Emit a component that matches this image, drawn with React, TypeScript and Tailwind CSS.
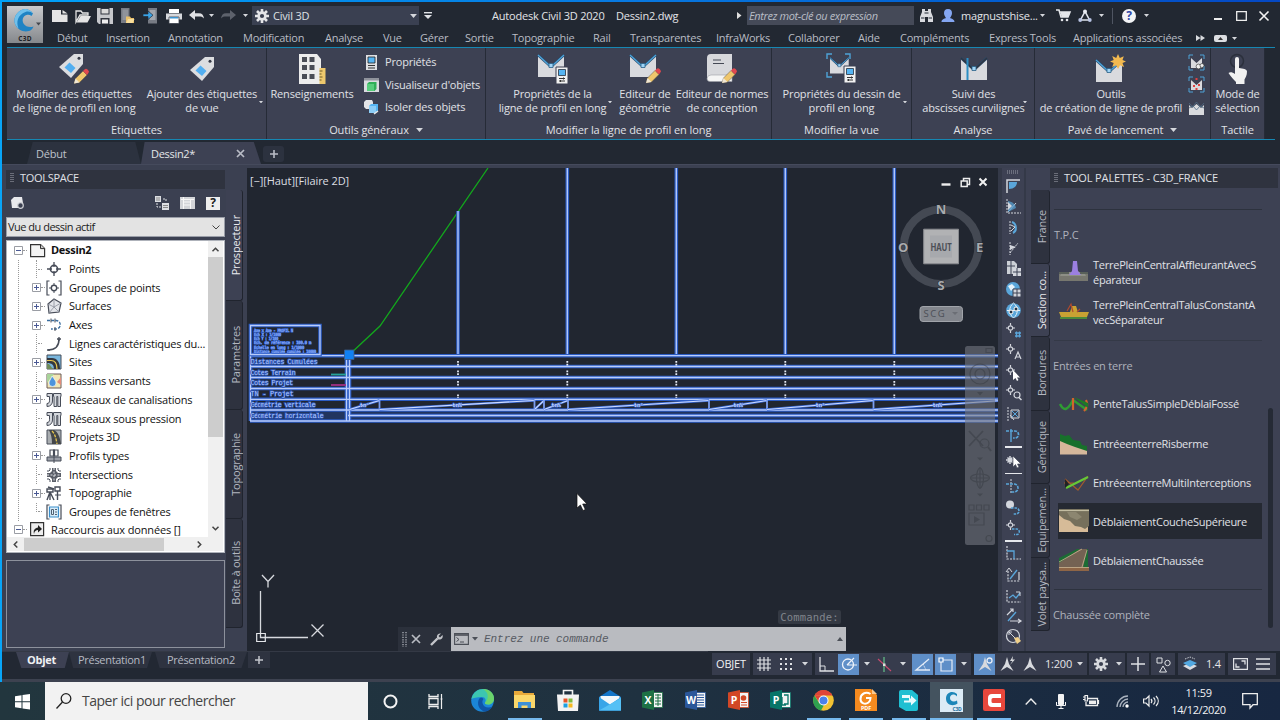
import React from "react";

type Kids = { children?: React.ReactNode };

/* ---------- shared helpers ---------- */

function Slot({ className, children }: { className: string } & Kids) {
  return <span className={`flex shrink-0 items-center justify-center ${className}`}>{children}</span>;
}

function Icon({ s = 16, h, vb, children }: { s?: number; h?: number; vb?: string } & Kids) {
  return (
    <svg width={s} height={h ?? s} viewBox={vb ?? `0 0 ${s} ${h ?? s}`} fill="none" className="block shrink-0 overflow-visible">
      {children}
    </svg>
  );
}

function Caret({ s = 6, c = "#d5d7dc" }: { s?: number; c?: string }) {
  return (
    <svg width={s} height={s / 2 + 0.5} viewBox="0 0 6 3.5" className="block shrink-0">
      <path d="M0 0h6L3 3.5z" fill={c} />
    </svg>
  );
}

function Pencil({ x, y }: { x: number; y: number }) {
  return (
    <g transform={`translate(${x} ${y})`}>
      <path d="M0 14.5 1.5 9.5 9 2l4 4-7.5 7.5z" fill="#efc66c" stroke="#5b5348" strokeWidth=".5" />
      <path d="M9 2l1.5-1.5a2 2 0 0 1 3 0l.7.7a2 2 0 0 1 0 3L13 6z" fill="#e0484f" />
      <path d="M0 14.5 1.5 9.5l4 4z" fill="#f0e6d4" />
    </g>
  );
}

function PropBadge({ x, y }: { x: number; y: number }) {
  return (
    <g transform={`translate(${x} ${y})`}>
      <path d="M0 0h12v17H0z" fill="#f1f1f1" stroke="#3d4153" />
      <path d="M2.500 2.500h7v6h-7z" fill="#55b4f2" stroke="#27313d" strokeWidth=".8" />
      <path d="M3 11.500h6M3 14h6M7.500 10.500v2M4.500 13v2" stroke="#333" strokeWidth="1" />
    </g>
  );
}

/* ---------- title bar ---------- */

function QuickAccess() {
  return (
    <div className="flex h-[27px] items-center">
      <Slot className="w-[22px]">
        <Icon s={16}><path d="M0 2h9v4.500h6.500V14H0z" fill="#e4e4e4" /><path d="M10.500 2l5 3.500h-5z" fill="#e4e4e4" /></Icon>
      </Slot>
      <Slot className="w-[23px]">
        <Icon s={16}><path d="M1 14V3h5l1.500 2H13v2H5z" fill="none" stroke="#e4e4e4" strokeWidth="1.300" /><path d="M5.500 8H16l-3.500 6.500H1.500z" fill="#e4e4e4" /></Icon>
      </Slot>
      <Slot className="w-[22px]">
        <Icon s={16}><path d="M0 0h16v16H2l-2-2z" fill="#c6c8cc" /><path d="M3.500 0h9v6.500h-9zM3.500 10h9v6h-9z" fill="#31353f" /><path d="M4.500 1h7v4.500h-7z" fill="#dadada" /><path d="M5 11.500h6v4H5z" fill="#eee" /></Icon>
      </Slot>
      <Slot className="w-[23px]">
        <Icon s={16}><path d="M1 0h8.500v15H1z" fill="#777b84" /><path d="M2.500 1.500h5.500V12h-5.500z" fill="#8f939b" /><path d="M6 8.500h4l1 1.500h3v5H6z" fill="#e9c06a" /><path d="M8 11h6.500l-2 4H6z" fill="#f7dd9c" /></Icon>
      </Slot>
      <Slot className="w-[23px]">
        <Icon s={16}><path d="M5 0h9v15.500H5z" fill="#777b84" /><path d="M6.500 2h6v10h-6z" fill="#a2a6ad" /><path d="M0 6h5V3l5 4.200-5 4.300v-3H0z" fill="#39a3e6" stroke="#222a36" strokeWidth=".7" /></Icon>
      </Slot>
      <Slot className="w-[23px]">
        <Icon s={16}><path d="M3 1h10v4H3z" fill="#fff" /><path d="M0 5.500h16v6H0z" fill="#d6d8dc" /><path d="M3 9h10v6.500H3z" fill="#fff" stroke="#3a3f4a" strokeWidth=".8" /><path d="M4 9h8v1.500H4z" fill="#3b95d2" /></Icon>
      </Slot>
      <Slot className="w-[22px]">
        <Icon s={15}><path d="M0 7l6-5v3.300h4c3 0 4.500 1.800 5 5.200-1.500-1.800-3-2-5-2H6V12z" fill="#e0e1e4" /></Icon>
      </Slot>
      <Slot className="w-[8px]"><Caret s={5} /></Slot>
      <Slot className="w-[26px]">
        <Icon s={15}><path d="M15 7L9 2v3.300H5C2 5.300.5 7.100 0 10.500c1.500-1.800 3-2 5-2h4V12z" fill="#5d626c" /></Icon>
      </Slot>
      <Slot className="mr-[4px] w-[8px]"><Caret s={5} /></Slot>
      <div className="-ml-px flex h-[19px] w-[167px] items-center bg-[#3a4051] pl-[3px] pr-[2px] text-[#dfe1e5]">
        <Gear s={14} />
        <span className="ml-[4px] flex-1">Civil 3D</span>
        <Caret s={7} />
      </div>
      <Slot className="w-[18px]">
        <Icon s={8}><path d="M0 .7h8" stroke="#dfe1e5" strokeWidth="1.400" /><path d="M0 3h8L4 7z" fill="#dfe1e5" /></Icon>
      </Slot>
      <span className="ml-[55px] w-[124px] text-[#e2e4e8]">Autodesk Civil 3D 2020</span>
      <span className="w-[121px] text-[#e2e4e8]">Dessin2.dwg</span>
      <Icon s={5} h={7}><path d="M0 0l4.500 3.500L0 7z" fill="#e0e0e0" /></Icon>
      <div className="ml-[5px] flex h-[19px] w-[167px] items-center bg-[#454a58] pl-[2px] italic text-[#b9bdc6]">
        <span className="tracking-[-0.38px]">Entrez mot-clé ou expression</span>
      </div>
      <Slot className="w-[24px]">
        <Icon s={13}><path d="M2 0h3v2h3V0h3v3l2 5v5H8V8H5v5H0V8l2-5z" fill="#d9dbe0" /><path d="M1 9h3.500M8.500 9H12M4.500 4h4" stroke="#232a36" strokeWidth="1" /></Icon>
      </Slot>
      <Slot className="w-[20px]">
        <Icon s={14}><path d="M7 0c3 0 4 2 4 4.200S9.500 8 9 9c1.500.8 4.500 1 4.500 4H.5c0-3 3-3.200 4.500-4C4.500 8 3 6.400 3 4.200S4 0 7 0z" fill="#84a6f2" /></Icon>
      </Slot>
      <span className="ml-[3px] w-[79px] text-[#e2e4e8]">magnustshise...</span>
      <Caret s={5} />
      <Slot className="ml-[6px] w-[24px]">
        <Icon s={14} h={13}><path d="M0 1h3l2 7h7l2-5H4" stroke="#e4e6ea" strokeWidth="1.600" fill="none" /><path d="M4.500 3H14l-2 5H5.500z" fill="#e4e6ea" /><circle cx="6" cy="11" r="1.300" fill="#e4e6ea" /><circle cx="11" cy="11" r="1.300" fill="#e4e6ea" /></Icon>
      </Slot>
      <Slot className="w-[20px]">
        <Icon s={14}><path d="M7 2.500L2.500 11h9z" stroke="#dfe3ec" strokeWidth="1.600" /><circle cx="7" cy="2.500" r="2" fill="#e9ecf3" /><circle cx="2.200" cy="11" r="1.900" fill="#b9c4e4" /><circle cx="11.800" cy="11" r="1.900" fill="#b9c4e4" /></Icon>
      </Slot>
      <Slot className="w-[12px]"><Caret s={5} /></Slot>
      <span className="ml-[5px] h-[16px] w-px bg-[#4f5562]" />
      <Slot className="ml-[3px] w-[26px]">
        <span className="flex h-[14px] w-[14px] items-center justify-center rounded-full bg-[#f3f4f6] text-[12px] font-bold leading-none text-[#3047a8]">?</span>
      </Slot>
      <Slot className="w-[8px]"><Caret s={5} /></Slot>
      <Slot className="ml-[60px] w-[16px]"><Icon s={8}><path d="M0 7h8" stroke="#eee" strokeWidth="2" /></Icon></Slot>
      <Slot className="ml-[4px] w-[22px]"><Icon s={11} h={10}><path d="M.7.7h9.600v8.600H.7z" stroke="#eee" strokeWidth="1.300" /></Icon></Slot>
      <Slot className="ml-[1px] w-[22px]"><Icon s={10}><path d="M.5.5l9 9M9.500.5l-9 9" stroke="#f2f2f2" strokeWidth="1.600" /></Icon></Slot>
    </div>
  );
}

function Gear({ s = 14, c = "#e4e5e8" }: { s?: number; c?: string }) {
  return (
    <svg width={s} height={s} viewBox="0 0 14 14" className="block shrink-0">
      <g stroke={c} strokeWidth="2.600">
        <path d="M7 0v14M0 7h14M2 2l10 10M12 2L2 12" />
      </g>
      <circle cx="7" cy="7" r="4.700" fill={c} />
      <circle cx="7" cy="7" r="2.100" fill="#3a4051" />
    </svg>
  );
}

const MENU: [string, string][] = [
  ["Début", "w-[49px]"], ["Insertion", "w-[62px]"], ["Annotation", "w-[75px]"], ["Modification", "w-[82px]"],
  ["Analyse", "w-[58px]"], ["Vue", "w-[37px]"], ["Gérer", "w-[45px]"], ["Sortie", "w-[47px]"],
  ["Topographie", "w-[81px]"], ["Rail", "w-[37px]"], ["Transparentes", "w-[86px]"], ["InfraWorks", "w-[72px]"],
  ["Collaborer", "w-[70px]"], ["Aide", "w-[42px]"], ["Compléments", "w-[89px]"], ["Express Tools", "w-[84px]"],
  ["Applications associées", "w-[123px]"],
];

function Header() {
  return (
    <header className="flex h-[45px] pl-[5px]">
      <div className="mt-[4px] flex h-[37px] w-[36px] shrink-0 flex-col items-center bg-gradient-to-b from-[#c9cbce] to-[#85888c]">
        <Icon s={36} h={29}>
          <path d="M26 7.500C23 3.500 18.500 2 14.500 4 8 7 6 14 8.500 19c2.500 5 8 7.500 13.500 6 2-.6 3.500-2 4.500-4.500-3.500 1.200-8 .5-10-3-1.800-3.500-.5-7.500 3-8.500 2-.5 3.500-.2 5 1z" fill="#1f83c4" />
          <path d="M14.500 4C8 7 6 14 8.500 19c1 1.500 1.500 2.500 3 3.500C9 16 10.500 9 18.500 6c3-1 5.500 0 7.500 1.500C23 3.500 18.500 2 14.500 4z" fill="#6fc0ec" />
          <path d="M29 16.500h5l-2.500 3z" fill="#43474d" />
        </Icon>
        <span className="text-[6.5px] font-bold leading-[7px] tracking-[0.3px] text-[#1d2024]">C3D</span>
      </div>
      <div className="flex flex-1 flex-col pl-[6px]">
        <QuickAccess />
        <nav className="flex h-[18px] items-center pl-[8px] tracking-[-0.23px] text-[#b9bcc4]">
          {MENU.map(([t, w]) => <span key={t} className={`shrink-0 ${w}`}>{t}</span>)}
          <Icon s={9} h={6}><path d="M0 0l4.500 3L0 6zM4.500 0L9 3 4.500 6z" fill="#d8dade" /></Icon>
          <span className="ml-[9px] flex h-[7px] w-[13px] items-center justify-center rounded-[2px] bg-[#dcdee2]">
            <Icon s={5} h={3}><path d="M0 3h5L2.500 0z" fill="#333" /></Icon>
          </span>
          <span className="ml-[5px]"><Caret s={5} /></span>
        </nav>
      </div>
    </header>
  );
}

/* ---------- ribbon ---------- */

function Panel({ w, title, caret, children }: { w: string; title: string; caret?: boolean } & Kids) {
  return (
    <section className={`flex shrink-0 flex-col border-r border-[#262b37] bg-[#3d4153] ${w}`}>
      <div className="flex h-[74px]">{children}</div>
      <div className="flex h-[16px] items-center justify-center gap-[7px] tracking-[-0.09px] text-[#e0e2e7]">
        <span>{title}</span>
        {caret && <Caret s={7} />}
      </div>
    </section>
  );
}

function Big({ w, lines, children }: { w: string; lines: string[] } & Kids) {
  return (
    <div className={`flex shrink-0 flex-col items-center ${w}`}>
      <div className="mt-[5px] flex h-[32px] items-center justify-center">{children}</div>
      <div className="mt-[2px] text-center leading-[14px] tracking-[-0.14px] text-[#e0e2e7]">
        {lines.map((l) => <div key={l}>{l}</div>)}
      </div>
    </div>
  );
}

function Drop({ pull }: { pull?: boolean }) {
  return <span className={`flex w-[6px] shrink-0 items-end justify-center pb-[19px] ${pull ? "-ml-[5px]" : ""}`}><Caret s={4} /></span>;
}

function Small({ label, children }: { label: string } & Kids) {
  return (
    <div className="flex h-[22.6px] items-center gap-[6px]">
      <Slot className="w-[15px]">{children}</Slot>
      <span className="text-[#e0e2e7]">{label}</span>
    </div>
  );
}

function Terrain({ line = "#4ea3d8" }: { line?: string }) {
  return (
    <g>
      <path d="M0 1l11.500 11h3L26 1v22H0z" fill="#d9dade" />
      <path d="M0 1l11.500 10.500h3L26 1" stroke="#27496a" strokeWidth="2.400" fill="none" />
      <path d="M0 1l11.500 10.500h3L26 1" stroke={line} strokeWidth="1.300" fill="none" />
      <path d="M11 9.500h4v4h-4z" fill="#9fd4f7" stroke="#2a5f86" strokeWidth=".8" />
    </g>
  );
}

function Tag() {
  return (
    <g>
      <path d="M15 0h9v10L12 24 0 13z" fill="#dcdde0" />
      <path d="M10.500 8.500l6 5.500-4.500 5-6.500-5.500z" fill="#52aef0" />
      <circle cx="20" cy="4.200" r="1.500" fill="#343845" />
    </g>
  );
}

function Brackets({ s }: { s: number }) {
  return <path d={`M0 5V0h5M${s - 5} 0h5v5M0 ${s - 5}v5h5`} stroke="#4ea3d8" strokeWidth="1.400" fill="none" />;
}

function Ribbon() {
  return (
    <div className="ml-[5px] flex h-[93px] w-[1268px] border-y border-[#1687b2] bg-[#222832]">
      <Panel w="w-[260px]" title="Etiquettes">
        <Big w="w-[134px]" lines={["Modifier des étiquettes", "de ligne de profil en long"]}>
          <Icon s={30}><Tag /><Pencil x={15} y={15} /></Icon>
        </Big>
        <Big w="w-[122px]" lines={["Ajouter des étiquettes", "de vue"]}>
          <Icon s={25}><Tag /></Icon>
        </Big>
        <Drop pull />
      </Panel>
      <Panel w="w-[219px]" title="Outils généraux" caret>
        <Big w="w-[90px]" lines={["Renseignements"]}>
          <Icon s={27} h={30}>
            <path d="M0 0h18l4 5v25H0z" fill="#ececec" />
            <g fill="#4a4d56"><path d="M3 3h5v5H3zM10.500 3h5v5h-5zM3 11h5v5H3zM10.500 11h5v5h-5zM3 20h5v5H3zM10.500 20h5v5h-5z" /></g>
            <path d="M20.500 14h6v16h-6z" fill="#edc86d" /><path d="M20.500 17h3M20.500 20h2M20.500 23h3M20.500 26h2" stroke="#6c5a2a" />
          </Icon>
        </Big>
        <div className="flex flex-col pl-[7px] pt-[3px]">
          <Small label="Propriétés">
            <Icon s={11} h={15}><path d="M0 0h11v15H0z" fill="#dfe0e3" /><path d="M2 2h7v6H2z" fill="#55b4f2" stroke="#222" strokeWidth=".8" /><path d="M2 10.500h7M2 13h7" stroke="#333" /></Icon>
          </Small>
          <Small label="Visualiseur d'objets">
            <Icon s={15} h={14}><path d="M0 0h15v14H0z" fill="#dadbe0" /><path d="M0 0h15v2.500H0z" fill="#8f939c" /><path d="M3 6l2-2h7.500v7l-2 2H3z" fill="#2fae57" /><path d="M3 6h7v7H3z" fill="#57cd7c" /></Icon>
          </Small>
          <Small label="Isoler des objets">
            <Icon s={15}><path d="M0 2l2-2h6l1 2v5l-2 2H2L0 7z" fill="#e3e4e7" /><path d="M5 6l2-2h7v7l-2 2H5z" fill="#55b4f2" /><path d="M5 6h7v7H5z" fill="#8ccdf6" /><path d="M10 14l4-3" stroke="#e6e6e6" strokeWidth="1.500" /></Icon>
          </Small>
        </div>
      </Panel>
      <Panel w="w-[286px]" title="Modifier la ligne de profil en long">
        <span className="w-[7px]" />
        <Big w="w-[119px]" lines={["Propriétés de la", "ligne de profil en long"]}>
          <Icon s={30}><Terrain /><PropBadge x={18} y={13} /></Icon>
        </Big>
        <Drop pull />
        <span className="w-[2px]" />
        <Big w="w-[60px]" lines={["Editeur de", "géométrie"]}>
          <Icon s={30}><Terrain /><Pencil x={16} y={14.500} /></Icon>
        </Big>
        <Big w="w-[94px]" lines={["Editeur de normes", "de conception"]}>
          <Icon s={30}><path d="M4 0h21v22H4a4 4 0 0 0-4 3V4a4 4 0 0 1 4-4z" fill="#d7d8dc" /><path d="M0 25a4 4 0 0 1 4-4h21v6.500H3a3 3 0 0 1-3-2.500z" fill="#f5f5f5" stroke="#9b9ea5" strokeWidth=".6" /><path d="M6 6h8M6 9.500h11" stroke="#444854" strokeWidth="1.200" /><Pencil x={15} y={14.500} /></Icon>
        </Big>
      </Panel>
      <Panel w="w-[140px]" title="Modifier la vue">
        <span className="w-[4px]" />
        <Big w="w-[131px]" lines={["Propriétés du dessin de", "profil en long"]}>
          <Icon s={30}><Brackets s={23} /><g transform="translate(3 3) scale(.72)"><Terrain /></g><PropBadge x={17} y={12} /></Icon>
        </Big>
        <Drop pull />
      </Panel>
      <Panel w="w-[123px]" title="Analyse">
        <span className="w-[8px]" />
        <Big w="w-[107px]" lines={["Suivi des", "abscisses curvilignes"]}>
          <Icon s={26} h={24}><Terrain line="#30343f" /><path d="M6.500 1v22" stroke="#2c8fc4" strokeWidth="2" /></Icon>
        </Big>
        <Drop pull />
      </Panel>
      <Panel w="w-[176px]" title="Pavé de lancement" caret>
        <Big w="w-[152px]" lines={["Outils", "de création de ligne de profil"]}>
          <Icon s={30}>
            <g transform="translate(0 5)"><Terrain /></g>
            <path d="M22 0l1.800 4 4-1.800L26.500 6l3.500 1.500-3.500 1.500 1.500 4-4-1.800L22 15l-1.800-3.800-4 1.800 1.500-4L14 7.500 17.700 6l-1.500-4L20.200 4z" fill="#f2b950" />
          </Icon>
        </Big>
        <div className="flex flex-col items-center pl-[2px] pt-[3px]">
          {[0, 1, 2].map((i) => (
            <span key={i} className="flex h-[22.6px] items-center">
              <Icon s={15}>
                {i < 2 && <path d="M0 4V0h4M11 0h4v4M0 11v4h4M11 15h4v-4" stroke="#4ea3d8" />}
                <path d={i === 2 ? "M0 5l3 3 4.500-4 4.500 4 3-3v10H0z" : "M2 3l5.500 5L13 3v10H2z"} fill="#d9dade" />
                {i === 0 && <><circle cx="9.500" cy="11.500" r="2.400" fill="#eee" stroke="#444" strokeWidth=".7" /><circle cx="13" cy="10.500" r="2" fill="#eee" stroke="#444" strokeWidth=".7" /></>}
                {i === 1 && <path d="M4 9h2M9 8h2M6.500 12h2M6.500 2h2" stroke="#e04040" strokeWidth="2" />}
                {i === 2 && <path d="M0 3l3.500 4L7.500 2l4 5L15 3M0 8l4-2 3.500 4L11 6l4 2" stroke="#4f6c86" strokeWidth=".8" />}
              </Icon>
            </span>
          ))}
        </div>
      </Panel>
      <Panel w="w-[54px]" title="Tactile">
        <Big w="w-[53px]" lines={["Mode de", "sélection"]}>
          <Icon s={20} h={30}>
            <circle cx="9" cy="7" r="6.500" stroke="#2b303c" strokeWidth="1.500" />
            <path d="M7 5a2 2 0 0 1 4 0v9c4 .5 8 1.200 8 3.500 0 4-1.500 6-2.500 8V30H8v-2c-2-2-5.500-6-7.500-9 1.500-1.500 4-1 6.500 1z" fill="#f1f1f1" />
          </Icon>
        </Big>
      </Panel>
    </div>
  );
}

function DocTabs() {
  return (
    <div className="flex h-[25px] items-end border-b-[1px] border-[#454a5c] pl-[25px] text-[#bfc3cb]">
      <div className="flex h-[22px] w-[114px] items-center bg-[#2c323f] pl-[9px] pt-px [clip-path:polygon(5%_0,95%_0,100%_100%,0_100%)]">Début</div>
      <div className="flex h-[22px] w-[120px] items-center bg-[#3d4153] pl-[10px] pt-px text-[#e4e6ea] [clip-path:polygon(3%_0,94%_0,100%_100%,0_100%)]">
        <span className="w-[86px] tracking-[-0.3px]">Dessin2*</span>
        <Icon s={7}><path d="M0 0l7 7M7 0L0 7" stroke="#b9bcc6" strokeWidth="1.700" /></Icon>
      </div>
      <div className="mb-[2px] ml-[2px] flex h-[16px] w-[21px] items-center justify-center rounded-[3px] bg-[#2c323f]">
        <Icon s={8}><path d="M4 0v8M0 4h8" stroke="#b9bcc6" strokeWidth="1.600" /></Icon>
      </div>
    </div>
  );
}

/* ---------- toolspace ---------- */

const DARK = "#474c58";

const TREE: { t: string; plus?: boolean; icon: React.ReactNode }[] = [
  { t: "Points", icon: <><circle cx="7" cy="7" r="3.600" stroke={DARK} strokeWidth="1.600" /><path d="M7 0v5M7 9v5M0 7h5M9 7h5" stroke={DARK} strokeWidth="1.300" /></> },
  { t: "Groupes de points", plus: true, icon: <><path d="M2.500 0H0v14h2.500M11.500 0H14v14h-2.500" stroke={DARK} strokeWidth="1.200" /><circle cx="7" cy="7" r="2.700" stroke={DARK} strokeWidth="1.400" /><path d="M7 2v3M7 9v3M2 7h3M9 7h3" stroke={DARK} /></> },
  { t: "Surfaces", plus: true, icon: <><path d="M1 5l6-5 7 4-2 9-10 1z" fill="#e3e5ea" stroke={DARK} strokeWidth="1.200" /><path d="M7 0v8M1 5l6 3M14 4L7 8M12 13L7 8M2 14l5-6" stroke="#8b909c" strokeWidth=".8" /></> },
  { t: "Axes", plus: true, icon: <><path d="M0 2.500h9a4 4 0 0 1 0 8.500H4" stroke="#3a6ea0" strokeWidth="1.300" strokeDasharray="3 1.200" /><path d="M4 .5v4M8 .5v4M8 9v4" stroke={DARK} /></> },
  { t: "Lignes caractéristiques du...", icon: <><path d="M1 13c7 0 11-4 11-11" stroke={DARK} strokeWidth="1.500" /><path d="M10 2h4M12 0v4M0 13h3" stroke={DARK} strokeWidth="1.300" /></> },
  { t: "Sites", plus: true, icon: <><path d="M0 0h14v14H0z" fill="#79b6dd" stroke={DARK} /><path d="M0 3h5c5 0 8 4 8 11H7c0-4-2-6-7-6z" fill="#33373f" /><path d="M0 5.500h4c4 0 6 3 6 8.500" stroke="#e9c84e" strokeWidth="1.200" /><path d="M0 9h2l4 5H0z" fill="#6f8b58" /></> },
  { t: "Bassins versants", icon: <><path d="M0 0h14v14H0z" fill="#f2e6b4" stroke="#6d5a56" /><path d="M0 0h7L0 9z" fill="#a9d49a" /><path d="M14 3l-4 5 4 3z" fill="#e58c7a" /><path d="M5 2c3 4 4 5 4 7a3.500 3.500 0 0 1-7 0c0-2 2-4 3-7z" fill="#4d94dd" stroke="#fff" strokeWidth=".6" /></> },
  { t: "Réseaux de canalisations", plus: true, icon: <Pipes /> },
  { t: "Réseaux sous pression", icon: <Pipes /> },
  { t: "Projets 3D", icon: <><path d="M0 0h14v14H0z" fill="#a9adb0" stroke={DARK} /><path d="M2 0h5c4 2 6 7 7 14H5C5 8 4 4 2 0z" fill="#43464a" /><path d="M5 1c3 3 4 7 5 13" stroke="#e9c84e" strokeWidth="1.300" strokeDasharray="3 1.300" /></> },
  { t: "Profils types", plus: true, icon: <><path d="M3 1h3.500v6H3zM7.500 1H11v6H7.500z" stroke={DARK} strokeWidth="1.200" /><path d="M0 8h14v4H0z" fill="#999da6" stroke={DARK} /><path d="M7 0v14" stroke={DARK} /></> },
  { t: "Intersections", icon: <><path d="M5 0v3l-2 2H0v4h3l2 2v3h4v-3l2-2h3V5h-3L9 3V0z" fill="#5a5e68" /><path d="M7 0v14M0 7h14" stroke="#e5e7ea" strokeDasharray="2 1.500" /><path d="M3 0v2L2 3H0M11 0v2l1 1h2M3 14v-2l-1-1H0M11 14v-2l1-1h2" stroke={DARK} /></> },
  { t: "Topographie", plus: true, icon: <><path d="M0 3h6v3H0zM3 6l-3 8M3 6v8M3 6l4 8M8 1h5v4H8zM10.500 5v9" stroke={DARK} strokeWidth="1.400" /><path d="M1 1l6 2" stroke={DARK} strokeWidth="1.500" /><path d="M8 9h6" stroke={DARK} /></> },
  { t: "Groupes de fenêtres", icon: <><path d="M2.500 0H0v14h2.500M11.500 0H14v14h-2.500" stroke={DARK} strokeWidth="1.200" /><path d="M2.500 2h9v10h-9z" fill="#d9ecf9" stroke="#3b8fcb" strokeWidth="1.200" /><path d="M4.500 4.500h2v5h-2zM8 4.500h2M8 7h2M8 9.500h2" stroke="#4f6172" /></> },
];

function Pipes() {
  return (
    <g transform="translate(0 .5)">
      <path d="M0 0h5.500v7.500c0 3-2 5.500-5.500 5.500v-3c1.800 0 2.500-1 2.500-2.800V3H0z" fill="#d5d8dd" stroke={DARK} />
      <path d="M6.500 0H14v3h-.5v10h-2.700V3h-1v10H7V3h-.5z" fill="#d5d8dd" stroke={DARK} />
    </g>
  );
}

function Expander({ minus }: { minus?: boolean }) {
  return (
    <svg width="9" height="9" viewBox="0 0 9 9" className="block shrink-0">
      <path d="M.5.5h8v8h-8z" fill="#fff" stroke="#9a9da4" />
      <path d={minus ? "M2 4.500h5" : "M2 4.500h5M4.500 2v5"} stroke="#4a5994" />
    </svg>
  );
}

function Tree() {
  return (
    <div className="mt-[3px] flex h-[313px] w-[219px] flex-col border border-[#aeb2ba] bg-white text-[#111]">
      <div className="flex h-[296px] overflow-hidden">
        <div className="w-[201px] pl-[7px]">
          <div className="flex h-[18.7px] items-center">
            <Expander minus />
            <span className="w-[4px] border-t border-dotted border-[#999]" />
            <span className="ml-[3px]"><Icon s={15} h={13}><path d="M.6.6h10l4 4v8H.6z" fill="#f4f4f4" stroke="#333" strokeWidth="1.200" /><path d="M10.500.6v4h4" stroke="#333" fill="#ccc" /></Icon></span>
            <span className="ml-[6px] font-bold tracking-[-0.3px]">Dessin2</span>
          </div>
          <div className="ml-[4px] border-l border-dotted border-[#999]">
            {TREE.map((n, i) => (
              <div key={n.t} className="flex h-[18.7px] items-center pl-[13px]">
                <span className="flex h-full w-[9px] items-center justify-center">
                  {n.plus ? <Expander /> : (
                    <span className={`flex w-px self-stretch border-l border-dotted border-[#999] ${i === 13 ? "mb-[9px]" : ""}`} />
                  )}
                </span>
                <span className={`w-[4px] border-t border-dotted border-[#999] ${n.plus ? "" : "-ml-[3px] mr-[3px]"}`} />
                <span className="ml-[2px] w-[15px]"><Icon s={14}>{n.icon}</Icon></span>
                <span className="ml-[7px] whitespace-nowrap tracking-[-0.2px]">{n.t}</span>
              </div>
            ))}
          </div>
          <div className="flex h-[15.5px] items-center">
            <Expander minus />
            <span className="w-[4px] border-t border-dotted border-[#999]" />
            <span className="ml-[3px]"><Icon s={14}><path d="M.6.6h13v13H.6z" fill="#eee" stroke="#333" strokeWidth="1.200" /><path d="M4 12c-1-4 1-6 4-6.500V3l4 4-4 3.500V8C6 8 4.500 9 4 12z" fill="#222" /></Icon></span>
            <span className="ml-[7px] whitespace-nowrap leading-[15px] tracking-[-0.15px]">Raccourcis aux données []</span>
          </div>
        </div>
        <div className="flex w-[15px] flex-col items-center justify-between bg-[#f0f0f0]">
          <Slot className="h-[16px]"><Icon s={7} h={5}><path d="M.5 4.300l3-3 3 3" stroke="#444" strokeWidth="1.500" /></Icon></Slot>
          <span className="w-full flex-1"><span className="block h-[180px] w-full bg-[#cdcdcd]" /></span>
          <Slot className="h-[18px]"><Icon s={7} h={5}><path d="M.5.700l3 3 3-3" stroke="#444" strokeWidth="1.500" /></Icon></Slot>
        </div>
      </div>
      <div className="flex h-[14px] w-[216px] items-center bg-[#f0f0f0]">
        <Slot className="w-[17px]"><Icon s={5} h={7}><path d="M4.300.5l-3 3 3 3" stroke="#444" strokeWidth="1.500" /></Icon></Slot>
        <span className="h-[13px] w-[140px] bg-[#cdcdcd]" />
        <Slot className="ml-[27px] w-[17px]"><Icon s={5} h={7}><path d="M.7.5l3 3-3 3" stroke="#444" strokeWidth="1.500" /></Icon></Slot>
      </div>
    </div>
  );
}

function VTab({ label, h, active }: { label: string; h: string; active?: boolean }) {
  return (
    <div className={`flex w-full shrink-0 items-center justify-center rounded-r-[3px] border-b border-r border-[#20242e] pl-[4px] ${h} ${active ? "bg-[#3d4153] text-[#e8e9ed]" : "bg-[#2e323f] text-[#b3b7c0]"}`}>
      <span className="rotate-180 whitespace-nowrap [writing-mode:vertical-rl]">{label}</span>
    </div>
  );
}

function Grip() {
  return (
    <Icon s={4} h={10}><path d="M1 0v10M3 0v10" stroke="#a6a9b3" strokeDasharray="1 1" /></Icon>
  );
}

function Toolspace() {
  return (
    <aside className="flex h-[483px] w-[245px] shrink-0 bg-[#3b4051]">
      <div className="ml-[4px] flex w-[219px] flex-col">
        <div className="mt-[2px] flex h-[19px] items-center gap-[6px] bg-[#2f333f] pb-[3px] pl-[4px] text-[#e0e2e7]">
          <Grip /><span className="tracking-[-0.3px]">TOOLSPACE</span>
        </div>
        <div className="flex h-[28px] items-center pl-[5px]">
          <Icon s={13}><path d="M0 3l3-3h8l1 6-2 5H1z" fill="#e8e9ec" /><circle cx="9.500" cy="8.500" r="2.800" fill="#3b4051" stroke="#cfd1d6" strokeWidth="1.200" /></Icon>
          <span className="ml-[130px]"><Icon s={16} h={14}><path d="M1 0h6v6H1zM8 7h7v7H8z" fill="#dcdee2" /><path d="M2 2h4M2 4h4M9 9.500h5M9 11.500h5" stroke="#888" /><path d="M9 3h3v3M3 7v4h4" stroke="#dcdee2" strokeDasharray="2 1" /></Icon></span>
          <span className="ml-[10px]"><Icon s={15} h={12}><path d="M0 0h15v12H0z" fill="#d3d5d9" /><path d="M1 2.500h13M3.500 0v12M10.500 3v9M4 5h6M4 8h6" stroke="#f8f8f8" /></Icon></span>
          <span className="ml-[11px] flex h-[13px] w-[14px] items-center justify-center bg-[#eee] text-[12px] font-bold leading-none text-[#222]">?</span>
        </div>
        <div className="flex h-[20px] items-center justify-between border border-[#9a9ea8] bg-[#e3e3e3] pl-[1px] pr-[4px] text-[#1b1b1b]">
          <span className="tracking-[-0.5px]">Vue du dessin actif</span>
          <Icon s={8} h={5}><path d="M.5.500l3.500 3.500L7.500.5" stroke="#444" /></Icon>
        </div>
        <Tree />
        <div className="mt-[7px] h-[88px] border border-[#8d919c] bg-[#3d4153]" />
      </div>
      <div className="flex w-[18px] flex-col pl-px pt-[22px]">
        <VTab label="Prospecteur" h="h-[111px]" active />
        <VTab label="Paramètres" h="h-[109px]" />
        <VTab label="Topographie" h="h-[109px]" />
        <VTab label="Boîte à outils" h="h-[109px]" />
      </div>
    </aside>
  );
}

/* ---------- drawing area ---------- */

const ROWS: [string, number, number][] = [
  ["Distances Cumulées", 363.8, 67], ["Cotes Terrain", 374.700, 45], ["Cotes Projet", 385.300, 42.500],
  ["TN - Projet", 396, 43], ["Géométrie verticale", 407.400, 65], ["Géométrie horizontale", 418.300, 73],
];
const STATIONS = [458, 567.3, 676.3, 785.3, 894.3];
const SEGS = [349.500, 379.500, 534.500, 544, 568, 709, 767, 873.500, 1001];
const HLINES = [355.700, 366.500, 377.500, 388.500, 399.300, 410, 415.500, 421];

function Glow({ d }: { d: string }) {
  return (
    <>
      <path d={d} stroke="#2c5cc4" strokeWidth="3.600" />
      <path d={d} stroke="#b9ccfa" strokeWidth="1.300" />
    </>
  );
}

function Drawing() {
  const grid =
    HLINES.map((y, i) => `M${i === 6 ? 348 : 250} ${y}H998`).join("") +
    "M250.500 355V421M346.500 355V421M349.500 355V421";
  return (
    <svg width="751" height="483" viewBox="247 168 751 483" fill="none" className="block">
      <path d="M349 355L380 326L488 168" stroke="#12a81c" strokeWidth="1.300" />
      <path d="M250 409h748v13.500H250z" fill="#22407f" opacity=".6" />
      <Glow d={STATIONS.map((x, i) => `M${x} ${i === 0 ? 211 : 168}V354`).join("")} />
      <Glow d={grid} />
      <Glow d="M250.500 325.500H320V354.500H250.500z" />
      {STATIONS.map((x) => (
        <path key={x} d={`M${x} 361v5M${x} 370.500v5M${x} 381v5M${x} 394.500v3.500`} stroke="#e6ebf5" strokeWidth="1.800" strokeDasharray="1.800 .9" />
      ))}
      {SEGS.slice(0, -1).map((x, i) => (
        <g key={x}>
          {i > 0 && <path d={`M${x} 400v10`} stroke="#7b9df0" strokeWidth="1.800" />}
          <path d={`M${x} 409.500L${SEGS[i + 1]} 400.500`} stroke="#3a6ad6" strokeWidth="2.400" />
          <path d={`M${x} 409.500L${SEGS[i + 1]} 400.500`} stroke="#cfdcff" strokeWidth="1.100" />
          {i !== 2 && (
            <text x={(x + SEGS[i + 1]) / 2} y="407" textAnchor="middle" fontSize="5.500" fontWeight="bold" fill="#d3deff" stroke="#2f5fc8" strokeWidth="1" paintOrder="stroke" className="font-['Liberation_Mono',monospace]">{i % 2 ? "tn%" : "tn°"}</text>
          )}
        </g>
      ))}
      {[0, 1, 2, 3, 4, 5].map((i) => (
        <text key={i} x="254" y={332 + i * 4.150} fontSize="4.200" fill="#a9c0ff" stroke="#3767d2" strokeWidth="1.200" paintOrder="stroke" textLength={[39, 27, 24, 57, 50, 62][i]} lengthAdjust="spacingAndGlyphs" className="font-['DejaVu_Sans_Mono',monospace]">
          {["Axe x Axe - PROFIL N", "Ech X : 1/1000", "Ech Y : 1/100", "Ech. de référence : 100.0 m", "Echelle en long : 1/1000", "Distance cumulée cumulée : 10000"][i]}
        </text>
      ))}
      {ROWS.map(([t, y, w]) => (
        <text key={t} x="250.500" y={y} fontSize="7" fill="#b4c9ff" stroke="#2a52ae" strokeWidth="1.600" paintOrder="stroke" textLength={w} lengthAdjust="spacing" xmlSpace="preserve" className="font-['Liberation_Mono','Liberation_Sans',monospace]">{t}</text>
      ))}
      <path d="M331 374.500h15" stroke="#25a29a" strokeWidth="1.800" />
      <path d="M331 385h15" stroke="#a22f83" strokeWidth="1.800" />
      <path d="M344.500 350h9.500v9.500h-9.500z" fill="#1180f2" stroke="#3e5c86" strokeWidth=".8" />

      <text x="250" y="185" fontSize="11" fill="#dcdee2" textLength="99">[−][Haut][Filaire 2D]</text>
      <path d="M941.500 184.500h9" stroke="#eee" strokeWidth="2.400" />
      <path d="M961.200 181h6v5.500h-6zM963.500 181v-2.500h6v6h-2.500" stroke="#eee" strokeWidth="1.500" />
      <path d="M979.500 178.500l7 7M986.500 178.500l-7 7" stroke="#f2f2f2" strokeWidth="2" />

      {/* view cube */}
      <circle cx="941" cy="246.700" r="37.300" stroke="#444953" strokeWidth="8" />
      <g fontSize="13" fontWeight="bold" fill="#a9abae" textAnchor="middle" stroke="#222731" strokeWidth="1" paintOrder="stroke">
        <text x="941" y="213.500">N</text><text x="941" y="290">S</text><text x="903" y="251.500">O</text><text x="979.500" y="251.500">E</text>
      </g>
      <path d="M923.700 229.200h34.800v34.600h-34.800z" fill="#b1b2b4" stroke="#8a8c90" />
      <path d="M930 235.500h22v22h-22z" fill="#a7a9ad" />
      <text x="930.500" y="250.500" fontSize="10.500" fontWeight="bold" fill="#4c4f56" textLength="21" lengthAdjust="spacingAndGlyphs">HAUT</text>
      <rect x="920" y="306.500" width="42.500" height="15" rx="3" fill="#82858c" stroke="#a1a4aa" />
      <text x="923.500" y="317" fontSize="9.500" fill="#4b4e56" textLength="21">SCG</text>
      <path d="M952 312h6l-3 3z" fill="#6b6e75" />

      {/* navigation bar */}
      <g opacity=".75">
        <rect x="965" y="346" width="30" height="199" rx="2.500" fill="#747881" opacity=".8" />
        <g stroke="#50545c" strokeWidth="1.200">
          <path d="M986 348.500h6v4h-6z" /><circle cx="980" cy="374" r="10" /><circle cx="980" cy="374" r="5" />
          <path d="M969 431l14 15M983 431l-14 15" strokeWidth="1.800" /><circle cx="984.500" cy="443.500" r="4.500" /><path d="M988 447l3 4" strokeWidth="2" />
          <ellipse cx="980" cy="478" rx="9.500" ry="4" /><ellipse cx="980" cy="478" rx="3.500" ry="10" /><path d="M980 467v22M970 478h19" />
          <path d="M969 505h5v5h-5zM976.500 505h5v5h-5zM984 505h5v5h-5zM969 513h15v12h-15z" /><circle cx="989" cy="538.500" r="3" />
        </g>
        <path d="M974 516l6 3.500-6 3.500zM977 392h6l-3 3.500zM977 457.500h6l-3 3zM977 493.500h6l-3 3z" fill="#50545c" />
      </g>

      {/* UCS icon */}
      <path d="M260.500 591v46.500H308" stroke="#d7d9de" strokeWidth="1.300" />
      <path d="M256.700 633.500h8.600v8h-8.600z" stroke="#e4e6ea" strokeWidth="1.200" />
      <path d="M262 575l6 6.500 6-6.500M268 581.500v6M311.500 624.500l12 12M323.500 624.500l-12 12" stroke="#d7d9de" strokeWidth="1.300" />

      {/* pointer */}
      <path d="M577 493.500v14.500l3.400-3 2.600 5.500 2.300-1-2.600-5.500h4.300z" fill="#fff" stroke="#111" strokeWidth=".7" />
    </svg>
  );
}

function Canvas() {
  return (
    <main className="relative h-[483px] w-[751px] shrink-0 bg-[#212630]">
      <Drawing />
      <div className="absolute left-[531px] top-[442px] flex h-[14px] w-[63px] items-center justify-center rounded-[2px] bg-[#343943] font-['DejaVu_Sans_Mono','Liberation_Mono',monospace] text-[10.500px] tracking-[0.2px] text-[#81858d]">Commande:</div>
      <div className="absolute left-[151px] top-[459px] flex h-[24px] w-[448px] items-center bg-[#2b303b]">
        <Slot className="w-[12px]"><Icon s={5} h={15}><path d="M1 0v15M4 0v15" stroke="#a6a9b1" strokeDasharray="1.200 1.200" strokeWidth="1.400" /></Icon></Slot>
        <Slot className="w-[12px]"><Icon s={8}><path d="M0 0l8 8M8 0L0 8" stroke="#b8bbc2" strokeWidth="1.700" /></Icon></Slot>
        <Slot className="w-[29px]"><Icon s={13}><path d="M1 12l6.500-6.500" stroke="#c3c5ca" strokeWidth="2.400" /><path d="M11 .5L8.500 3l1.500 1.500L12.500 2c1 2.500-1 5-4 4.500C5.500 5 7-.5 11 .5z" fill="#c3c5ca" /></Icon></Slot>
        <div className="flex h-full flex-1 items-center bg-[#b9bbc0] pl-[3px] pr-[3px]">
          <Icon s={15} h={12}><path d="M.6.6h13.800v10.800H.6z" stroke="#4b4f57" strokeWidth="1.100" /><path d="M.6 2h14" stroke="#4b4f57" strokeWidth="1.600" /><path d="M2.500 4.500L5 6.500 2.500 8.500M6 9h4" stroke="#4b4f57" /></Icon>
          <span className="ml-[3px]"><Caret s={6} c="#4b4f57" /></span>
          <span className="ml-[6px] flex-1 font-['Liberation_Mono',monospace] text-[11px] italic tracking-[-0.05px] text-[#565a62]">Entrez une commande</span>
          <Icon s={6} h={4}><path d="M0 4h6L3 0z" fill="#4b4f57" /></Icon>
        </div>
      </div>
    </main>
  );
}

/* ---------- transparent commands toolbar ---------- */

const W = "#d3d6dd";
const B = "#5aa6da";

const TOOLS: React.ReactNode[] = [
  <><path d="M1 14V1h13" stroke={W} strokeWidth="1.500" /><path d="M3 3h8c0 4-3 7-8 7z" fill={B} /></>,
  <><path d="M1 0v14h14" stroke={W} strokeDasharray="2 1" /><path d="M2 13L10 4" stroke={W} /><path d="M2 2c5 1 7 3 8 7L2 13z" fill={B} opacity=".7" /><path d="M2 3l4 4-4 4z" fill={W} /></>,
  <><path d="M4 1v13" stroke={W} strokeDasharray="2 1" /><path d="M6 2c5 2 5 9 1 11" stroke={B} strokeWidth="2" /><path d="M5 5l4 2-4 4" stroke={W} /></>,
  <><path d="M4 1v13" stroke={W} strokeDasharray="2 1" /><path d="M4 12L12 2" stroke={W} strokeDasharray="2 1" /><path d="M4 4l6 2-6 3z" fill={W} /></>,
  <><path d="M1 0h7l3 3v10H1z" fill="#ccd0d6" /><path d="M0 5h9M5 0v13" stroke="#3d4254" /><path d="M7 7h8v8H7z" fill={W} /><path d="M11 7v8M7 11h8" stroke="#3d4254" /></>,
  <><circle cx="7" cy="7" r="7" fill={B} /><path d="M2 4l4-2 3 3-4 4z" fill="#e6f3fb" /><path d="M7 7h8v8H7z" fill={W} stroke="#3d4254" /><path d="M11 7v8M7 11h8" stroke="#3d4254" /></>,
  <><circle cx="7.500" cy="7.500" r="7.300" fill={B} /><path d="M1 7.500h13M7.500 0c-5 4-5 11 0 15M7.500 0c5 4 5 11 0 15" stroke="#e6f3fb" strokeWidth="1" /><circle cx="5" cy="9" r="2" fill="#234" stroke="#fff" /><circle cx="10" cy="6" r="2" fill="#234" stroke="#fff" /></>,
  <><Pt /><path d="M9 10h6M9 13h6M10.500 8.500v6M13.500 8.500v6" stroke={B} strokeWidth="1.300" /></>,
  <><Pt /><path d="M9 15l3-7 3 7M10 13h4" stroke={W} strokeWidth="1.200" /></>,
  <><Pt /><path d="M7 5v10l2.500-2 1.500 3 1.500-1-1.500-2.500H14z" fill="#fff" /></>,
  <><Pt /><circle cx="11" cy="10" r="3" stroke={W} strokeWidth="1.200" /><path d="M13 12.500l2.500 2.500" stroke={W} strokeWidth="1.500" /></>,
  <><path d="M2 1v14" stroke={W} strokeDasharray="2 1" /><path d="M5 4h8v8H5z" fill="#3d4254" stroke={W} /><path d="M6 5l6 6M12 5l-6 6" stroke={B} /><path d="M4 9l4 5" stroke={W} /></>,
  <><path d="M0 4h9a3.500 3.500 0 0 1 0 7H7" stroke={B} strokeWidth="1.700" strokeDasharray="3 1" /><path d="M5 2v13" stroke={B} strokeWidth="1.400" /></>,
  null,
  <><path d="M4 3v8M0 7h8M1.500 4.500l5 5M6.500 4.500l-5 5" stroke={W} strokeWidth="1.500" /><path d="M7 3v11l2.500-2.500L11 15l2-1-1.500-3H15z" fill="#fff" stroke="#3d4153" strokeWidth=".6" /></>,
  null,
  <><path d="M5 0v15" stroke={W} strokeDasharray="2 1" /><path d="M0 5h8a4 4 0 0 1 0 8H4" stroke={B} strokeWidth="1.600" strokeDasharray="3 1" /></>,
  <><circle cx="4" cy="4.500" r="4" fill={W} /><path d="M5 8h5a3 3 0 0 1 0 6H7" stroke={B} strokeWidth="1.600" strokeDasharray="2.500 1" /></>,
  <><Pt /><path d="M6 9h5a2.800 2.800 0 0 1 0 5.500H8" stroke={B} strokeWidth="1.500" strokeDasharray="2.500 1" /></>,
  null,
  <><path d="M1 0v13h14" stroke={W} strokeDasharray="2 1.200" strokeWidth="1.200" /><path d="M1 5h7v8" stroke={B} strokeWidth="1.300" /></>,
  <><path d="M2 4v10h12" stroke={W} strokeDasharray="2 1.200" strokeWidth="1.200" /><path d="M0 5l3-4 3 4" stroke={W} /><path d="M4 12L11 3" stroke={B} strokeWidth="1.400" /><path d="M13 5v8" stroke={W} strokeWidth="1.200" /></>,
  <><path d="M1 2v12h14" stroke={W} strokeDasharray="2 1.200" strokeWidth="1.200" /><path d="M3 10l4-3 3 3 4-5" stroke={B} strokeWidth="1.300" /><path d="M10 4h4v4" stroke={W} /></>,
  <><path d="M1 7l6-6M4 1h3v3" stroke={W} strokeWidth="1.200" /><path d="M2 13l8-9" stroke={B} strokeWidth="1.400" /><path d="M4 13h11M12 11l3 2-3 2" stroke={W} strokeWidth="1.200" /></>,
  <><circle cx="7" cy="7" r="6.500" stroke={W} strokeWidth="1.200" /><path d="M3 3l6 6M3 6V3h3" stroke={W} /><path d="M8 9l4-1 3 4-4 3z" fill="#efcf8a" /></>,
];

function Pt() {
  return <><circle cx="4.500" cy="5" r="2.200" stroke="#d3d6dd" strokeWidth="1.200" /><path d="M4.500 0v2.500M4.500 7.500V10M0 5h2M7 5h2" stroke="#d3d6dd" strokeWidth="1.200" /></>;
}

function CommandBar() {
  return (
    <div className="flex h-[483px] w-[28px] shrink-0 flex-col items-center border-l-[4px] border-r-[2px] border-[#343948] bg-[#3d4153]">
      <Slot className="h-[8px]"><Icon s={12} h={4}><path d="M0 1h12M0 3h12" stroke="#9a9da8" strokeDasharray="1 1" /></Icon></Slot>
      {TOOLS.map((t, i) =>
        t ? <Slot key={i} className="h-[20.65px]"><Icon s={15}>{t}</Icon></Slot>
          : <Slot key={i} className="h-[5.600px]"><span className="h-[1.500px] w-[17px] bg-[#e6e8ec]" /></Slot>
      )}
    </div>
  );
}

/* ---------- tool palettes ---------- */

function Item({ h, lines, active, children }: { h: string; lines: string[]; active?: boolean } & Kids) {
  return (
    <div className={`ml-[8px] flex w-[204px] shrink-0 items-center pl-[1px] ${h} ${active ? "bg-[#252932]" : ""}`}>
      <Icon s={30} h={24}>{children}</Icon>
      <div className="ml-[4px] whitespace-nowrap leading-[15px] tracking-[-0.25px] text-[#e0e2e7]">
        {lines.map((l) => <div key={l}>{l}</div>)}
      </div>
    </div>
  );
}

function ToolPalettes() {
  return (
    <aside className="flex h-[483px] flex-1 bg-[#3d4153]">
      <div className="flex w-[24px] flex-col pl-[5px] pt-[22px]">
        <VTab label="France" h="h-[74px]" />
        <VTab label="Section co..." h="h-[73px]" active />
        <VTab label="Bordures" h="h-[74px]" />
        <VTab label="Générique" h="h-[73px]" />
        <VTab label="Equipemen..." h="h-[74px]" />
        <VTab label="Volet paysa..." h="h-[73px]" />
      </div>
      <div className="flex w-[228px] flex-col">
        <div className="flex h-[20px] items-center gap-[6px] bg-[#2f333f] pl-[4px] text-[#e0e2e7]">
          <Grip /><span className="tracking-[-0.13px]">TOOL PALETTES - C3D_FRANCE</span>
        </div>
        <div className="flex">
          <div className="flex w-[216px] flex-col">
            <div className="ml-[4px] mt-[21px] h-px w-[208px] bg-[#2d323e]" />
            <div className="mt-[17px] h-[16px] pl-[4px] leading-[16px] text-[#aeb2bc]">T.P.C</div>
            <div className="h-[9px]" />
            <Item h="h-[40px]" lines={["TerrePleinCentralAffleurantAvecS", "éparateur"]}>
              <path d="M0 14h10l4-3h5l4 3h6v7H0z" fill="#77776f" /><path d="M3 12h22l2 4H1z" fill="#8d8f86" /><path d="M14 1h4l1 10 3 4h-12l3-4z" fill="#9b7fe0" /><path d="M0 13h10M21 13h8" stroke="#59605a" strokeWidth="2" />
            </Item>
            <Item h="h-[39px]" lines={["TerrePleinCentralTalusConstantA", "vecSéparateur"]}>
              <path d="M0 12h11l2-6h4l2 6h11l-2 5H2z" fill="#c9a233" /><path d="M8 11l4-7 2 8M18 12l3-3" stroke="#b04a2e" strokeWidth="1.200" /><path d="M1 17h27v2H1z" fill="#4c8a3a" />
            </Item>
            <div className="ml-[4px] mt-[9px] h-px w-[208px] bg-[#343947]" />
            <div className="mt-[16px] h-[18px] pl-[3px] leading-[18px] text-[#aeb2bc]">Entrées en terre</div>
            <div className="h-[8px]" />
            <Item h="h-[41px]" lines={["PenteTalusSimpleDéblaiFossé"]}>
              <path d="M1 12c4 8 8 6 13-4l14 10" stroke="#2f9c33" strokeWidth="2.500" /><path d="M14 6v12M27 8c2 4 1 8-2 11" stroke="#d0652c" strokeWidth="2.200" /><path d="M15 5l14 6v5z" fill="#1d7a26" />
            </Item>
            <Item h="h-[39px]" lines={["EntréeenterreRisberme"]}>
              <path d="M1 8l12 3 15 7v4.500H1z" fill="#d5b79b" /><path d="M1 2l5 2 4-1 4 5 7 1 2 4 5 1v5l-6-2-6-2-8-3-7-3z" fill="#17702b" />
            </Item>
            <Item h="h-[39px]" lines={["EntréeenterreMultiInterceptions"]}>
              <path d="M6 8l13 11 10-14M5 12l10 0" stroke="#a35a2c" strokeWidth="1.200" /><path d="M7 17L29 6" stroke="#66c837" strokeWidth="2.200" /><path d="M6 8l4 5-4 4z" fill="#222" />
            </Item>
            <div className="h-px" />
            <Item h="h-[36px]" active lines={["DéblaiementCoucheSupérieure"]}>
              <path d="M0 1h29v22H0z" fill="#d6bb98" /><path d="M0 0h30v17l-4 3-4-2-6-1-5-5-6-2-5-4z" fill="#76705c" /><path d="M8 3l9 0 6 5-5 3-7-3z" fill="#8c8670" /><path d="M0 1.500h30" stroke="#c3bda2" strokeWidth="1.200" />
            </Item>
            <Item h="h-[42px]" lines={["DéblaiementChaussée"]}>
              <path d="M0 10L18 1h11v19H0z" fill="#1c6c34" /><path d="M21 1h7l-4 19H0V15z" fill="#746253" /><path d="M0 19.500h30V23H0z" fill="#8e6546" /><path d="M0 19.500h30M0 14L23 1M28 2l-5 17" stroke="#ccb593" strokeWidth=".8" />
            </Item>
            <div className="ml-[4px] mt-[8px] h-px w-[208px] bg-[#2d323e]" />
            <div className="mt-[17px] h-[16px] pl-[3px] leading-[16px] text-[#aeb2bc]">Chaussée complète</div>
          </div>
          <div className="ml-[2px] mt-[220px] h-[220px] w-[5px] rounded-full bg-[#252a35]" />
        </div>
      </div>
    </aside>
  );
}

/* ---------- status bar ---------- */

function Group({ w, ml, children }: { w: string; ml: string } & Kids) {
  return <div className={`flex h-[22px] shrink-0 items-center bg-[#373c4d] ${w} ${ml}`}>{children}</div>;
}

function Compass({ k }: { k: number }) {
  return (
    <Icon s={16}>
      <path d="M8 1l2 7 4.500 7-6.500-4-6.500 4L6 8z" fill="#d8dade" />
      {k === 0 && <circle cx="12.500" cy="4.500" r="2.500" stroke="#e8eef7" strokeWidth="1.300" />}
      {k === 1 && <path d="M14 0l-3 5h2.500L11 9l5-5.500h-2.500z" fill="#d8dade" />}
    </Icon>
  );
}

function StatusBar() {
  return (
    <div className="flex h-[31px] items-start border-b-[3px] border-[#3d4250] bg-[#222833]">
      <div className="flex h-[17px] w-[706px] items-center border-t border-[#343945] pl-[14px] text-[#b6bac3]">
        <div className="flex h-full w-[53px] items-center bg-[#3d4153] pl-[11px] font-bold tracking-[-0.25px] text-[#f0f1f4] [clip-path:polygon(0_0,100%_0,92%_100%,10%_100%)]">Objet</div>
        <div className="flex h-full w-[83px] items-center bg-[#2e3340] pl-[9px] tracking-[-0.3px] [clip-path:polygon(0_0,100%_0,94%_100%,5%_100%)]">Présentation1</div>
        <div className="ml-[3px] flex h-full w-[92px] items-center bg-[#2e3340] pl-[12px] tracking-[-0.3px] [clip-path:polygon(0_0,100%_0,94%_100%,5%_100%)]">Présentation2</div>
        <div className="ml-[1px] flex h-full w-[22px] items-center justify-center bg-[#2e3340]"><Icon s={8}><path d="M4 0v8M0 4h8" stroke="#c3c6cc" strokeWidth="1.500" /></Icon></div>
      </div>
      <div className="flex pt-[2px]">
        <Group w="w-[38px]" ml="ml-[4px]"><span className="w-full text-center tracking-[-0.2px] text-[#f0f1f4]">OBJET</span></Group>
        <Group w="w-[59px]" ml="ml-[3px]">
          <Slot className="w-[22px]"><Icon s={14}><path d="M3 0v14M7 0v14M11 0v14M0 3h14M0 7h14M0 11h14" stroke="#dfe1e5" strokeWidth="1.200" /></Icon></Slot>
          <Slot className="w-[22px]"><Icon s={12}><path d="M0 1h12M0 6h12M0 11h12" stroke="#dfe1e5" strokeWidth="2" strokeDasharray="2 3" /></Icon></Slot>
          <Slot className="w-[15px]"><Caret /></Slot>
        </Group>
        <Group w="w-[156px]" ml="ml-[3px]">
          <Slot className="w-[23px]"><Icon s={15}><path d="M1 0v14h14" stroke="#dfe1e5" strokeWidth="1.300" /><path d="M1 9h5v5" stroke="#dfe1e5" /></Icon></Slot>
          <Slot className="h-[21px] w-[21px] bg-[#5f8fc8]"><Icon s={16}><circle cx="7" cy="8.500" r="5.500" stroke="#eef3fa" strokeWidth="1.300" /><path d="M6 9h10M6 9l7-7" stroke="#eef3fa" strokeWidth="1.200" /></Icon></Slot>
          <Slot className="w-[16px]"><Caret /></Slot>
          <Slot className="w-[19px]"><Icon s={15}><path d="M1 2l13 12" stroke="#c94b6f" strokeWidth="1.100" /><path d="M7 0v15" stroke="#64c28a" strokeWidth="1.200" /><path d="M6 6.500h2.500v2.500H6z" fill="#ddd" /></Icon></Slot>
          <Slot className="w-[18px]"><Caret /></Slot>
          <Slot className="h-[21px] w-[21px] bg-[#5f8fc8]"><Icon s={15}><path d="M14 2L1 13h14" stroke="#e4ecf7" strokeWidth="1.300" /><path d="M8 7l3 6" stroke="#e4ecf7" strokeDasharray="1.500 1" /></Icon></Slot>
          <Slot className="ml-[2px] h-[21px] w-[21px] bg-[#5f8fc8]"><Icon s={15}><path d="M3 3h11v11H3z" stroke="#e4ecf7" strokeWidth="1.200" /><path d="M1 1h4v4H1z" fill="#5f8fc8" stroke="#fff" strokeWidth="1.200" /></Icon></Slot>
          <Slot className="w-[15px]"><Caret /></Slot>
        </Group>
        <Group w="w-[113px]" ml="ml-[3px]">
          <Slot className="h-[21px] w-[21px] bg-[#5f8fc8]"><Compass k={0} /></Slot>
          <Slot className="w-[23px]"><Compass k={1} /></Slot>
          <Slot className="w-[23px]"><Compass k={2} /></Slot>
          <span className="w-[32px] pl-[4px] text-[#e4e5e9]">1:200</span>
          <Slot className="w-[13px]"><Caret /></Slot>
        </Group>
        <Group w="w-[36px]" ml="ml-[2px]"><Slot className="w-[23px]"><Gear s={14} c="#d8dade" /></Slot><Slot className="w-[14px]"><Caret /></Slot></Group>
        <Group w="w-[22px]" ml="ml-[2px]"><Slot className="w-full"><Icon s={14}><path d="M7 0v14M0 7h14" stroke="#dfe1e5" strokeWidth="1.500" /></Icon></Slot></Group>
        <Group w="w-[24px]" ml="ml-[2px]"><Slot className="w-full"><Icon s={15}><path d="M1 1h5v5H1zM7 9l3.500 6h-7z" stroke="#dfe1e5" /><circle cx="11.500" cy="6" r="2.700" stroke="#dfe1e5" /></Icon></Slot></Group>
        <Group w="w-[47px]" ml="ml-[3px]">
          <Slot className="w-[24px]"><Icon s={16}><path d="M1 10l7-3 7 3-7 4z" fill="#d9dce1" /><path d="M1 7l7-3 7 3-7 4z" fill="#52a8e0" /><path d="M3 3l5-2 5 2" stroke="#c8ccd2" strokeDasharray="1.500 1" /></Icon></Slot>
          <span className="pl-[4px] text-[#e4e5e9]">1.4</span>
        </Group>
        <Group w="w-[48px]" ml="ml-[3px]">
          <Slot className="w-[24px]"><Icon s={15} h={12}><path d="M.6.6h13.800v10.800H.6z" stroke="#dfe1e5" strokeWidth="1.200" /><path d="M8.500 3H12v3.500M6.500 9H3V5.500" stroke="#dfe1e5" strokeWidth="1.300" /></Icon></Slot>
          <Slot className="w-[22px]"><Icon s={14} h={12}><path d="M0 1h14M0 6h14M0 11h14" stroke="#dfe1e5" strokeWidth="1.700" /></Icon></Slot>
        </Group>
      </div>
    </div>
  );
}

/* ---------- taskbar ---------- */

function TaskApp({ run, active, children }: { run?: boolean; active?: boolean } & Kids) {
  return (
    <div className={`flex h-full w-[42.67px] shrink-0 flex-col items-center ${active ? "bg-[#44535f]" : ""}`}>
      <Slot className="h-[36px]">{children}</Slot>
      {run && <span className={`h-[2px] bg-[#76b9ed] ${active ? "w-full" : "w-[34px]"}`} />}
    </div>
  );
}

function Office({ c, l, n }: { c: string; l: string; n: number }) {
  return (
    <Icon s={21} h={20}>
      <path d="M10 2.500h10.500v15H10z" fill="#f4f4f4" stroke={c} strokeWidth=".8" />
      {n === 0 && <path d="M13 5h6M13 8h6M13 11h6M13 14h6M16 4v12" stroke={c} />}
      {n === 1 && <path d="M12 5h7M12 7.500h7M12 10h7M12 12.500h7M12 15h7" stroke={c} />}
      {n === 2 && <><circle cx="15.500" cy="8" r="2.800" fill={c} /><path d="M13 12.500h6M13 15h6" stroke={c} /></>}
      {n === 3 && <path d="M14 5h4v9h-4M12 7v8h4" stroke={c} strokeWidth="1.300" />}
      <path d="M0 2.500L12 0v20L0 17.500z" fill={c} />
      <text x="6" y="14" fontSize="10.500" fontWeight="bold" fill="#fff" textAnchor="middle">{l}</text>
    </Icon>
  );
}

function Taskbar() {
  return (
    <footer className="flex h-[38px] items-center bg-gradient-to-r from-[#22363e] via-[#1f3140] to-[#172741]">
      <Slot className="w-[45px]"><Icon s={15}><path d="M0 2.200L6.500 1.200v6H0zM7.500 1L15 0v7.200H7.500zM0 8.200h6.500v6L0 13.200zM7.500 8.200H15V15.500l-7.500-1z" fill="#fff" /></Icon></Slot>
      <div className="flex h-[38px] w-[323px] items-center bg-[#f2f2f2] pl-[11px] text-[#444]">
        <Icon s={16}><circle cx="10" cy="5.500" r="4.800" stroke="#222" strokeWidth="1.300" /><path d="M6.500 9L.5 15.500" stroke="#222" strokeWidth="1.300" /></Icon>
        <span className="ml-[10px] text-[14px] tracking-[-0.48px]">Taper ici pour rechercher</span>
      </div>
      <Slot className="w-[45px]"><Icon s={15}><circle cx="7.500" cy="7.500" r="6" stroke="#f3f3f3" strokeWidth="2" /></Icon></Slot>
      <Slot className="w-[45px]"><Icon s={15}><path d="M1 0v2.500h9V0M1 15v-2.500h9V15M1 4.500h9v6H1z" stroke="#eee" strokeWidth="1.300" /><path d="M13.500 0v15M12.500 5h2" stroke="#eee" strokeWidth="1.200" /></Icon></Slot>
      <div className="flex h-full pl-[3px]">
        <TaskApp>
          <Icon s={23}>
            <circle cx="11.500" cy="11.500" r="11.300" fill="#1b86d8" />
            <path d="M.5 10C2 3 7 0 12 0c7 0 11 5 11 9.500 0 4-3 6-6 6-2.500 0-3.500-1-3-2 1.500-2 .5-5.500-3-5.500C6 8 2 9 .5 10z" fill="#3cc6b0" />
            <path d="M12 0c7 0 11 5 11 9.500 0 4-3 6-6 6-2.500 0-3.500-1-3-2C17 11 19 4 12 0z" fill="#6bd36b" />
            <path d="M8 10c-2.500 5 0 11 5.500 12.500 3 0 6-2 8-5-4 2-9 1-10-3.500-.3-2 .2-3 1-4C11 8 9 8.500 8 10z" fill="#0e55a8" />
          </Icon>
        </TaskApp>
        <TaskApp run><Icon s={21} h={18}><path d="M0 0h8l1.500 2H20v15H0z" fill="#e8a93a" /><path d="M0 4h21v13H0z" fill="#fbd76a" /><path d="M4 17v-6h13v6h-3.500v-2.500h-6V17z" fill="#3d8fd6" /></Icon></TaskApp>
        <TaskApp><Icon s={22}><path d="M6.500 6V1.500h9V6" stroke="#f3f3f3" strokeWidth="1.600" /><path d="M0 5.500h22L21 22H1z" fill="#f3f3f3" /><path d="M6.500 9.500h4v4h-4z" fill="#e65528" /><path d="M11.500 9.500h4v4h-4z" fill="#7fba3c" /><path d="M6.500 14.500h4v4h-4z" fill="#1ba0e2" /><path d="M11.500 14.500h4v4h-4z" fill="#f5b81f" /></Icon></TaskApp>
        <TaskApp><Icon s={22} h={21}><path d="M0 7l11-7 11 7v13.500H0z" fill="#1475c8" /><path d="M1.500 6h19v8l-9.500 3-9.500-3z" fill="#f4f8fb" /><path d="M0 7l11 7.500L22 7v13.500H0z" fill="#38a5e8" /><path d="M0 20.500L22 8v12.500z" fill="#55c0f5" /></Icon></TaskApp>
        <TaskApp><Office c="#1e7145" l="X" n={0} /></TaskApp>
        <TaskApp><Office c="#2b579a" l="W" n={1} /></TaskApp>
        <TaskApp><Office c="#d24726" l="P" n={2} /></TaskApp>
        <TaskApp><Office c="#077568" l="P" n={3} /></TaskApp>
        <TaskApp run>
          <Icon s={21}>
            <circle cx="10.500" cy="10.500" r="10.300" fill="#f1c232" />
            <path d="M1.500 5.300A10.300 10.300 0 0 1 19.500 5.500h-9z" fill="#e04438" /><path d="M1.500 5.300L10.500 5.500l-4 7.500z" fill="#e04438" />
            <path d="M1.400 5.500l4.800 7.500 4.800 2-3 5.500A10.300 10.300 0 0 1 1.400 5.500z" fill="#2fa14f" />
            <circle cx="10.500" cy="10.500" r="5" fill="#fff" /><circle cx="10.500" cy="10.500" r="4" fill="#4a80ea" />
          </Icon>
        </TaskApp>
        <TaskApp run><Icon s={22}><path d="M0 0h16l6 6v16H0z" fill="#f48a1f" /><path d="M17 0l5 5h-5z" fill="#fbc98f" /><path d="M15.500 5c-5-3-10 0-10 5s5 5.500 8 3.500c1.500-1 2-3 2-4.500h-4.500" stroke="#fff" strokeWidth="2" /><text x="11" y="20.500" fontSize="5.500" fontWeight="bold" fill="#fff" textAnchor="middle">PDF</text></Icon></TaskApp>
        <TaskApp run><Icon s={19} h={21}><path d="M0 2a2 2 0 0 1 2-2h11l6 5v14a2 2 0 0 1-2 2H7L0 17z" fill="#1fbfd2" /><path d="M3 5h8v3.500h1V5.500l5.500 5-5.500 5v-3H5v-2h5V8H3z" fill="#e9fbfd" /></Icon></TaskApp>
        <TaskApp run active><Icon s={23}><path d="M0 0h23v23H0z" fill="#dcebf5" /><path d="M17 5C13 1 6 3 6 9.500S13 18 17.500 14.500l-.5-3c-3 2-7 1-7-2.500s4-5 7-1.500z" fill="#1c86b8" /><text x="17" y="21.500" fontSize="5" fontWeight="bold" fill="#1c6f9e" textAnchor="middle">C3D</text></Icon></TaskApp>
        <TaskApp run><Icon s={22}><path d="M2 0h18a2 2 0 0 1 2 2v18a2 2 0 0 1-2 2H2a2 2 0 0 1-2-2V2a2 2 0 0 1 2-2z" fill="#e8473c" /><path d="M18 5H9a4 4 0 0 0-4 4v5a4 4 0 0 0 4 4h9v-4h-8a1.500 1.500 0 0 1-1.500-1.500v-2A1.500 1.500 0 0 1 10 9h8z" fill="#fff" /></Icon></TaskApp>
      </div>
      <Slot className="w-[30px]"><Icon s={12} h={7}><path d="M.7 6.500L6 1l5.300 5.500" stroke="#eee" strokeWidth="1.400" /></Icon></Slot>
      <Slot className="w-[30px]"><Icon s={12} h={15}><rect x="3" y="0" width="6" height="11" rx="1" fill="#f3f3f3" /><path d="M1.500 8v3.500h9V8M6 12v3M3.500 14.500h5" stroke="#f3f3f3" /></Icon></Slot>
      <Slot className="w-[31px]"><Icon s={16} h={12}><path d="M4.500 3.500h10v7H3V7" stroke="#eee" strokeWidth="1.300" /><path d="M6 5.500h7v3.500H6z" fill="#eee" /><path d="M15.500 5v4M0 2h2M0 4.500h2M2 .5h2.500v5.500H2z" stroke="#eee" strokeWidth="1.200" /></Icon></Slot>
      <Slot className="w-[31px]"><Icon s={12}><path d="M1 12C1 6 6 1 12 1M4 12c0-4 4-8 8-8M7 12c0-2.500 2.500-5 5-5" stroke="#a9b2be" strokeWidth="1.300" /><circle cx="11" cy="11" r="1.700" fill="#fff" /></Icon></Slot>
      <Slot className="w-[27px]"><Icon s={16} h={12}><path d="M.6 4h2.400l3-3v10L3 8H.6z" stroke="#eee" strokeWidth="1.200" /><path d="M8 4c1 1.200 1 3 0 4M10.500 2.500c2 2 2 5 0 7M13 1c3 3 3 7 0 10" stroke="#eee" strokeWidth="1.200" /></Icon></Slot>
      <div className="ml-px flex w-[66px] flex-col items-center text-[11px] leading-[17px] text-[#f1f2f4]">
        <span className="tracking-[-0.4px]">11:59</span><span className="tracking-[-0.4px]">14/12/2020</span>
      </div>
      <Slot className="ml-[3px] w-[30px]"><Icon s={16}><path d="M.7.700h14.600v11H11l-3 3.300v-3.300H.7z" stroke="#eee" strokeWidth="1.300" /></Icon></Slot>
    </footer>
  );
}

export default function App() {
  return (
    <div className="flex h-[720px] w-[1280px] flex-col overflow-hidden bg-[#222832] font-['Open_Sans','Noto_Sans',sans-serif] text-[11px] leading-[14px] tracking-[-0.2px]">
      <div className="h-[2px] shrink-0 bg-gradient-to-r from-[#00a2f8] via-[#0878e0] to-[#0548c4]" />
      <div className="flex h-[680px] shrink-0">
        <div className="w-[2px] shrink-0 bg-[#08a5f8]" />
        <div className="flex w-[1278px] shrink-0 flex-col whitespace-nowrap">
          <Header />
          <Ribbon />
          <DocTabs />
          <div className="h-[3px] shrink-0 bg-[#3b4051]" />
          <div className="flex h-[483px] shrink-0">
            <Toolspace />
            <Canvas />
            <CommandBar />
            <ToolPalettes />
          </div>
          <StatusBar />
        </div>
      </div>
      <Taskbar />
    </div>
  );
}
